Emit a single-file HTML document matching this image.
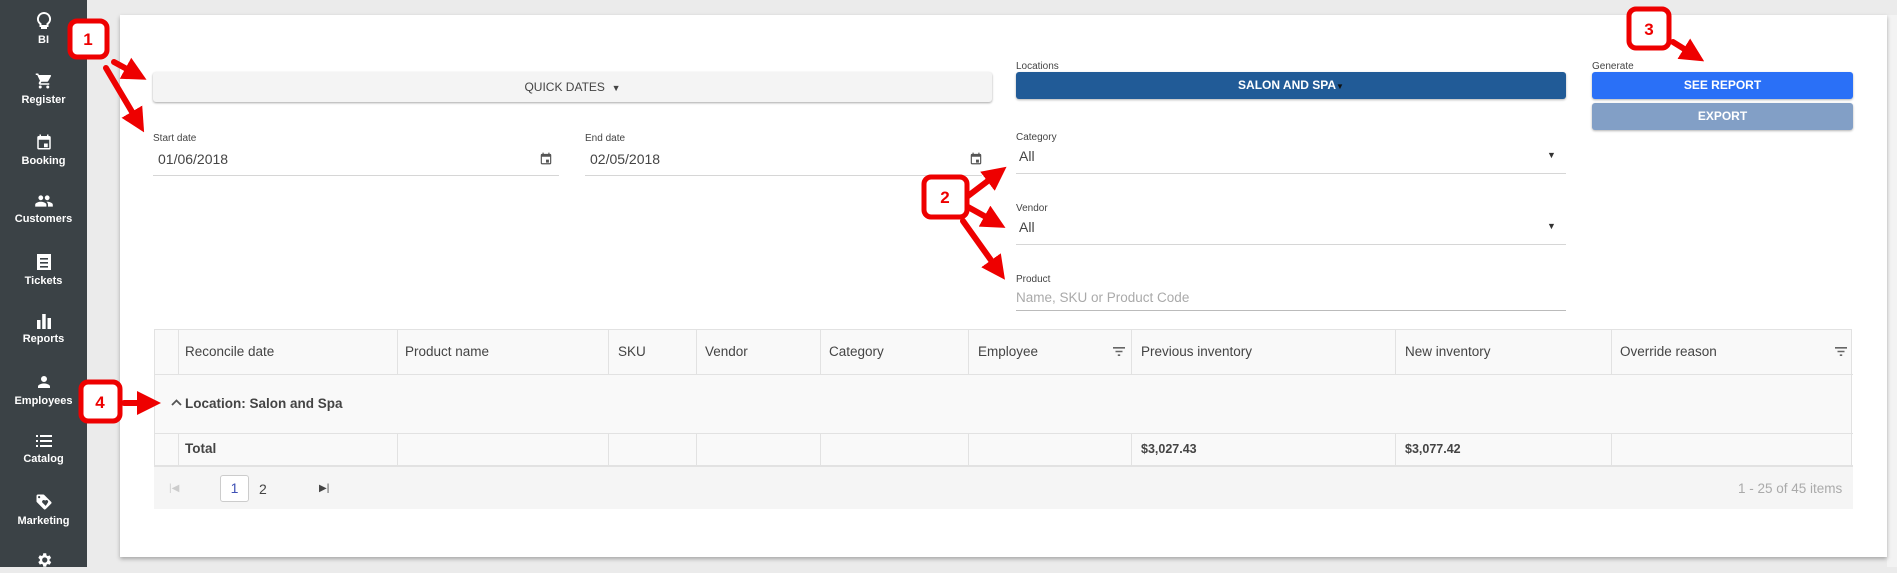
<!DOCTYPE html>
<html><head><meta charset="utf-8"><style>
*{box-sizing:border-box;margin:0;padding:0}
body{width:1897px;height:567px;overflow:hidden;background:#ebebeb;font-family:"Liberation Sans",Arial,sans-serif;position:relative;color:#333}
.side{position:absolute;left:0;top:0;width:87px;height:567px;background:#3b4246}
.si{position:absolute;left:0;width:87px;text-align:center;color:#fff;font-weight:bold;font-size:11px}
.si svg{display:block;margin:0 auto 4px}
.card{position:absolute;left:120px;top:15px;width:1767px;height:542px;background:#fff;box-shadow:0 2px 4px rgba(0,0,0,.3)}
.a{position:absolute}
.lbl{position:absolute;font-size:10px;color:#444}
.val{position:absolute;font-size:14px;color:#444}
.line{position:absolute;height:1px;background:#d6d6d6}
.btn{position:absolute;color:#fff;font-weight:bold;font-size:12px;text-align:center;border-radius:3px;box-shadow:0 1px 2px rgba(0,0,0,.3)}
.th{position:absolute;font-size:13.5px;color:#444;top:0;line-height:45px}
.vl{position:absolute;width:1px;background:#e2e2e2}
</style></head><body>
<div class="side">
 <div class="si" style="top:12px"><svg width="16" height="18" viewBox="0 0 16 18"><path d="M8 1a6 6 0 0 0-3.5 10.9V14h7v-2.1A6 6 0 0 0 8 1z" fill="none" stroke="#fff" stroke-width="2"/><rect x="5" y="15" width="6" height="2" fill="#fff"/></svg>BI</div>
 <div class="si" style="top:72px"><svg width="18" height="18" viewBox="0 0 24 24"><path fill="#fff" d="M7 18a2 2 0 1 0 0 4 2 2 0 0 0 0-4zM1 2v2h2l3.6 7.6-1.4 2.4c-.7 1.300.3 3 1.8 3h12v-2H7.4l1.1-2h7.5c.8 0 1.4-.4 1.7-1l3.6-6.5A1 1 0 0 0 20.4 4H5.2l-.9-2H1zm16 16a2 2 0 1 0 0 4 2 2 0 0 0 0-4z"/></svg>Register</div>
 <div class="si" style="top:133px"><svg width="18" height="18" viewBox="0 0 24 24"><path fill="#fff" d="M19 4h-1V2h-2v2H8V2H6v2H5a2 2 0 0 0-2 2v14a2 2 0 0 0 2 2h14a2 2 0 0 0 2-2V6a2 2 0 0 0-2-2zm0 16H5V9h14v11zm-7-6h5v5h-5z"/></svg>Booking</div>
 <div class="si" style="top:193px"><svg width="20" height="16" viewBox="0 0 24 20"><path fill="#fff" d="M16 9a3 3 0 1 0 0-6 3 3 0 0 0 0 6zM8 9a3 3 0 1 0 0-6 3 3 0 0 0 0 6zm0 2c-2.3 0-7 1.2-7 3.5V17h14v-2.5C15 12.2 10.3 11 8 11zm8 0h-1c1.2.8 2 2 2 3.5V17h6v-2.5c0-2.3-4.7-3.5-7-3.5z"/></svg>Customers</div>
 <div class="si" style="top:253px"><svg width="16" height="18" viewBox="0 0 16 18"><rect x="1" y="1" width="14" height="16" fill="#fff"/><rect x="4" y="5" width="8" height="1.6" fill="#3b4246"/><rect x="4" y="9" width="8" height="1.6" fill="#3b4246"/><rect x="4" y="13" width="8" height="1.6" fill="#3b4246"/></svg>Tickets</div>
 <div class="si" style="top:313px"><svg width="16" height="16" viewBox="0 0 16 16"><rect x="1" y="7" width="3.5" height="9" fill="#fff"/><rect x="6.2" y="1" width="3.5" height="15" fill="#fff"/><rect x="11.5" y="5" width="3.5" height="11" fill="#fff"/></svg>Reports</div>
 <div class="si" style="top:373px"><svg width="18" height="18" viewBox="0 0 24 24"><path fill="#fff" d="M12 12a4 4 0 1 0 0-8 4 4 0 0 0 0 8zm0 2c-2.700 0-8 1.3-8 4v2h16v-2c0-2.7-5.3-4-8-4z"/></svg>Employees</div>
 <div class="si" style="top:433px"><svg width="18" height="16" viewBox="0 0 18 16"><path fill="#fff" d="M1 2h2v2H1zM5 2h12v2H5zM1 7h2v2H1zM5 7h12v2H5zM1 12h2v2H1zM5 12h12v2H5z"/></svg>Catalog</div>
 <div class="si" style="top:493px"><svg width="18" height="18" viewBox="0 0 24 24"><path fill="#fff" d="M21.4 11.6l-9-9A2 2 0 0 0 11 2H4a2 2 0 0 0-2 2v7c0 .6.2 1.1.6 1.4l9 9a2 2 0 0 0 2.8 0l7-7a2 2 0 0 0 0-2.8zM5.5 7a1.5 1.5 0 1 1 0-3 1.5 1.5 0 0 1 0 3zm8.8 10.2L10 13a2.2 2.2 0 0 1 3.1-3.1l.4.4.4-.4A2.2 2.2 0 0 1 17 13z"/></svg>Marketing</div>
 <div class="si" style="top:551px"><svg width="18" height="18" viewBox="0 0 24 24"><path fill="#fff" d="M19.4 13a7.5 7.5 0 0 0 0-2l2.1-1.6-2-3.5-2.5 1a7 7 0 0 0-1.7-1L15 3h-4l-.4 2.6a7 7 0 0 0-1.7 1l-2.5-1-2 3.5L6.5 11a7.5 7.5 0 0 0 0 2l-2.1 1.6 2 3.5 2.5-1c.5.4 1.1.7 1.7 1L11 21h4l.4-2.6c.6-.3 1.2-.6 1.7-1l2.5 1 2-3.5zM13 15.5a3.5 3.5 0 1 1 0-7 3.5 3.5 0 0 1 0 7z"/></svg></div>
</div>
<div class="a" style="left:1887px;top:15px;width:10px;height:552px;background:#f3f3f3"></div>
<div class="card"></div>

<div class="a" style="left:153px;top:72px;width:839px;height:30px;background:#f4f4f4;border-radius:3px;box-shadow:0 1px 2px rgba(0,0,0,.35);text-align:center;font-size:12px;line-height:30px;color:#444">QUICK DATES&nbsp;&nbsp;<span style="font-size:9px">&#9660;</span></div>

<div class="lbl" style="left:153px;top:133px">Start date</div>
<div class="val" style="left:158px;top:151px">01/06/2018</div>
<div class="line" style="left:153px;top:175px;width:406px"></div>
<svg class="a" style="left:539px;top:151px" width="14" height="15" viewBox="0 0 24 24"><path fill="#555" d="M19 4h-1V2h-2v2H8V2H6v2H5a2 2 0 0 0-2 2v14a2 2 0 0 0 2 2h14a2 2 0 0 0 2-2V6a2 2 0 0 0-2-2zm0 16H5V9h14v11zm-7-6h5v5h-5z"/></svg>

<div class="lbl" style="left:585px;top:133px">End date</div>
<div class="val" style="left:590px;top:151px">02/05/2018</div>
<div class="line" style="left:585px;top:175px;width:397px"></div>
<svg class="a" style="left:969px;top:151px" width="14" height="15" viewBox="0 0 24 24"><path fill="#555" d="M19 4h-1V2h-2v2H8V2H6v2H5a2 2 0 0 0-2 2v14a2 2 0 0 0 2 2h14a2 2 0 0 0 2-2V6a2 2 0 0 0-2-2zm0 16H5V9h14v11zm-7-6h5v5h-5z"/></svg>

<div class="lbl" style="left:1016px;top:61px">Locations</div>
<div class="btn" style="left:1016px;top:72px;width:550px;height:27px;background:#215b97;line-height:27px">SALON AND SPA<span style="font-size:8px;color:#111">&#9660;</span></div>

<div class="lbl" style="left:1016px;top:132px">Category</div>
<div class="val" style="left:1019px;top:148px">All</div>
<div class="a" style="left:1547px;top:150px;font-size:9px;color:#333">&#9660;</div>
<div class="line" style="left:1016px;top:173px;width:550px"></div>

<div class="lbl" style="left:1016px;top:203px">Vendor</div>
<div class="val" style="left:1019px;top:219px">All</div>
<div class="a" style="left:1547px;top:221px;font-size:9px;color:#333">&#9660;</div>
<div class="line" style="left:1016px;top:244px;width:550px"></div>

<div class="lbl" style="left:1016px;top:274px">Product</div>
<div class="val" style="left:1016px;top:290px;font-size:13.5px;color:#aaa">Name, SKU or Product Code</div>
<div class="line" style="left:1016px;top:310px;width:550px;background:#bbb"></div>

<div class="lbl" style="left:1592px;top:61px">Generate</div>
<div class="btn" style="left:1592px;top:72px;width:261px;height:27px;background:#2a70f7;line-height:27px">SEE REPORT</div>
<div class="btn" style="left:1592px;top:103px;width:261px;height:27px;background:#829fc6;line-height:27px">EXPORT</div>

<div class="a" style="left:154px;top:329px;width:1698px;height:179px;background:#f9f9f9;border:1px solid #e2e2e2;border-bottom:none">
 <div class="a" style="left:0;top:44px;width:1698px;height:1px;background:#e2e2e2"></div>
 <div class="a" style="left:0;top:103px;width:1698px;height:1px;background:#e2e2e2"></div>
 <div class="a" style="left:0;top:135px;width:1698px;height:2px;background:#e2e2e2"></div>
 <div class="a" style="left:-1px;top:137px;width:1699px;height:42px;background:#f5f5f5"></div>
</div>
<div class="vl" style="left:178px;top:329px;height:45px"></div><div class="vl" style="left:178px;top:433px;height:32px"></div>
<div class="vl" style="left:397px;top:329px;height:45px"></div><div class="vl" style="left:397px;top:433px;height:32px"></div>
<div class="vl" style="left:608px;top:329px;height:45px"></div><div class="vl" style="left:608px;top:433px;height:32px"></div>
<div class="vl" style="left:696px;top:329px;height:45px"></div><div class="vl" style="left:696px;top:433px;height:32px"></div>
<div class="vl" style="left:820px;top:329px;height:45px"></div><div class="vl" style="left:820px;top:433px;height:32px"></div>
<div class="vl" style="left:968px;top:329px;height:45px"></div><div class="vl" style="left:968px;top:433px;height:32px"></div>
<div class="vl" style="left:1131px;top:329px;height:45px"></div><div class="vl" style="left:1131px;top:433px;height:32px"></div>
<div class="vl" style="left:1395px;top:329px;height:45px"></div><div class="vl" style="left:1395px;top:433px;height:32px"></div>
<div class="vl" style="left:1611px;top:329px;height:45px"></div><div class="vl" style="left:1611px;top:433px;height:32px"></div>
<div class="a" style="left:0;top:329px;width:1897px;height:45px">
 <div class="th" style="left:185px">Reconcile date</div>
 <div class="th" style="left:405px">Product name</div>
 <div class="th" style="left:618px">SKU</div>
 <div class="th" style="left:705px">Vendor</div>
 <div class="th" style="left:829px">Category</div>
 <div class="th" style="left:978px">Employee</div>
 <div class="th" style="left:1141px">Previous inventory</div>
 <div class="th" style="left:1405px">New inventory</div>
 <div class="th" style="left:1620px">Override reason</div>
</div>
<svg class="a" style="left:1113px;top:347px" width="12" height="9" viewBox="0 0 12 9"><path d="M0 0h12v1.6H0zM2.5 3.7h7v1.6h-7zM4.8 7.4h2.4V9H4.8z" fill="#666"/></svg>
<svg class="a" style="left:1835px;top:347px" width="12" height="9" viewBox="0 0 12 9"><path d="M0 0h12v1.6H0zM2.5 3.7h7v1.6h-7zM4.8 7.4h2.4V9H4.8z" fill="#666"/></svg>
<svg class="a" style="left:171px;top:399px" width="11" height="7" viewBox="0 0 11 7"><path d="M1 6l4.5-4.5L10 6" fill="none" stroke="#555" stroke-width="1.8"/></svg>
<div class="a" style="left:185px;top:396px;font-size:13.5px;font-weight:bold;color:#444">Location: Salon and Spa</div>
<div class="a" style="left:185px;top:441px;font-size:13.5px;font-weight:bold;color:#444">Total</div>
<div class="a" style="left:1141px;top:442px;font-size:12.5px;font-weight:bold;color:#444">$3,027.43</div>
<div class="a" style="left:1405px;top:442px;font-size:12.5px;font-weight:bold;color:#444">$3,077.42</div>
<div class="a" style="left:169px;top:483px;font-size:10px;color:#ccc">|&#9664;</div>
<div class="a" style="left:220px;top:475px;width:29px;height:27px;border:1px solid #ccc;border-radius:3px;background:#fff;text-align:center;line-height:25px;font-size:14px;color:#3f51b5">1</div>
<div class="a" style="left:259px;top:481px;font-size:14px;color:#444">2</div>
<div class="a" style="left:319px;top:483px;font-size:10px;color:#444">&#9654;|</div>
<div class="a" style="left:1738px;top:481px;font-size:13.5px;color:#aaa">1 - 25 of 45 items</div>

<svg class="a" style="left:0;top:0" width="1897" height="567">
<defs><marker id="ah" markerWidth="4" markerHeight="4" refX="2" refY="2" orient="auto"><path d="M0 0L4 2L0 4z" fill="#e00"/></marker></defs>
<g stroke="#e00" stroke-width="6" stroke-linecap="round" fill="none" marker-end="url(#ah)">
<line x1="114" y1="62" x2="136" y2="74"/>
<line x1="106" y1="68" x2="138" y2="122"/>
<line x1="968" y1="196" x2="997" y2="174"/>
<line x1="968" y1="207" x2="995" y2="222"/>
<line x1="963" y1="221" x2="998" y2="270"/>
<line x1="1673" y1="42" x2="1694" y2="55"/>
<line x1="124" y1="403" x2="149" y2="403"/>
</g>
<g>
<rect x="70" y="21" width="37" height="36" rx="7" fill="#fff" stroke="#e00" stroke-width="5"/>
<rect x="924" y="177" width="43" height="40" rx="7" fill="#fff" stroke="#e00" stroke-width="5"/>
<rect x="1629" y="9" width="40" height="39" rx="7" fill="#fff" stroke="#e00" stroke-width="5"/>
<rect x="81" y="382" width="39" height="39" rx="7" fill="#fff" stroke="#e00" stroke-width="5"/>
</g>
<g fill="#e00" font-family="Liberation Sans,sans-serif" font-weight="bold" font-size="17" text-anchor="middle">
<text x="88" y="45">1</text><text x="945" y="203">2</text><text x="1649" y="35">3</text><text x="100" y="408">4</text>
</g>
</svg>
</body></html>
